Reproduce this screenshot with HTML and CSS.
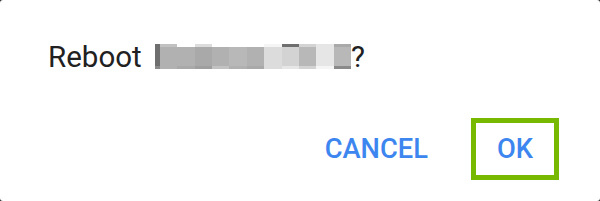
FILE: index.html
```
<!DOCTYPE html>
<html lang="en">
<head>
    <meta charset="UTF-8">
    <title>Reboot</title>
    <link rel="stylesheet" href="styles.css">
</head>
<body>
    <div class="dialog">
        <div class="title">Reboot <span class="masked"><span class="pixels">
            <i class="s1"></i><i class="s7"></i><i class="s12"></i><i class="s9"></i><i class="s12"></i><i class="s12"></i><i class="s12"></i><i class="s11"></i><i class="s1"></i><i class="s8"></i><i class="s10"></i><i class="s4"></i>
            <i class="s1"></i><i class="s5"></i><i class="s5"></i><i class="s4"></i><i class="s5"></i><i class="s6"></i><i class="s5"></i><i class="s9"></i><i class="s8"></i><i class="s6"></i><i class="s10"></i><i class="s6"></i>
            <i class="s2"></i><i class="s5"></i><i class="s4"></i><i class="s3"></i><i class="s7"></i><i class="s5"></i><i class="s4"></i><i class="s9"></i><i class="s10"></i><i class="s8"></i><i class="s11"></i><i class="s2"></i>
        </span></span>?</div>
        <div class="actions">
            <button class="button">CANCEL</button>
            <button class="button focused">OK</button>
        </div>
    </div>
</body>
</html>
```

FILE: styles.css
```
html, body {
    margin: 0;
    background: #2a2a2a;
}
.dialog {
    width: 600px;
    height: 201px;
    box-sizing: border-box;
    background: #fff;
    border-radius: 3px;
    padding: 40px 41px 0 48px;
    font-family: Roboto, "Liberation Sans", sans-serif;
}
.title {
    font-size: 29.5px;
    color: #212121;
    line-height: 34px;
}
/* pixelated device name */
.masked {
    display: inline-block;
    overflow: hidden;
    width: 196px;
    height: 25px;
    margin-left: 6px;
    vertical-align: -2px;
}
.pixels {
    display: grid;
    grid-template-columns: 5px repeat(11, 1fr);
    grid-template-rows: 3px 19px 3px;
    height: 100%;
}
.s1 { background: #6f6f6f; }
.s2 { background: #8a8a8a; }
.s3 { background: #9f9f9f; }
.s4 { background: #a9a9a9; }
.s5 { background: #b1b1b1; }
.s6 { background: #b8b8b8; }
.s7 { background: #c2c2c2; }
.s8 { background: #d3d3d3; }
.s9 { background: #dcdcdc; }
.s10 { background: #e6e6e6; }
.s11 { background: #f5f5f5; }
.s12 { background: #fff; }
.actions {
    display: flex;
    justify-content: flex-end;
    gap: 17px;
    margin-top: 44px;
}
.button {
    background: none;
    border: 5px solid transparent;
    font-family: inherit;
    font-weight: 500;
    font-size: 27.3px;
    line-height: 32px;
    color: #3d86ef;
    padding: 10px 21px;
}
.focused {
    border-color: #76b900;
}
```
